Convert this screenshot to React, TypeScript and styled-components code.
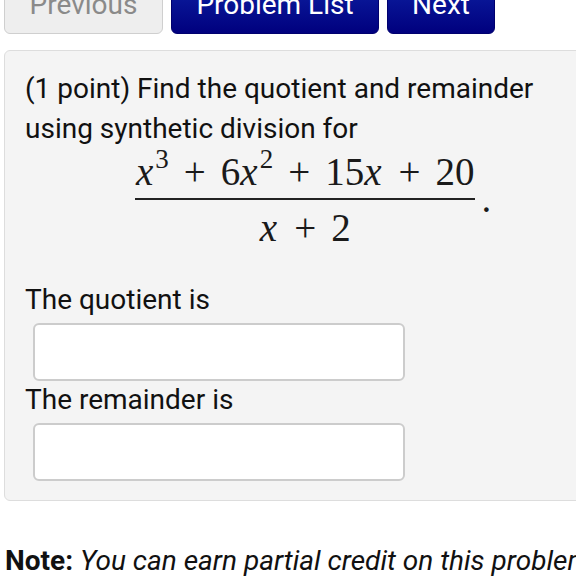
import React from "react";
import styled, { createGlobalStyle } from "styled-components";

const GlobalStyle = createGlobalStyle`
  html, body {
    margin: 0;
    padding: 0;
    background: #ffffff;
    overflow: hidden;
  }
  body {
    font-family: Roboto, "Liberation Sans", Arial, sans-serif;
    color: #111111;
  }
`;

const Page = styled.div`
  width: 576px;
  height: 576px;
  overflow: hidden;
`;

const Nav = styled.nav`
  display: flex;
  gap: 8px;
  margin-top: -16px;
  padding-left: 4px;
`;

const NavButton = styled.button<{ $primary?: boolean; $width: number }>`
  box-sizing: border-box;
  width: ${(p) => p.$width}px;
  height: 50px;
  padding: 0 0 8px;
  border-radius: 6px;
  font-family: Roboto, "Liberation Sans", Arial, sans-serif;
  font-size: 28px;
  line-height: 28px;
  cursor: pointer;
  border: 1px solid ${(p) => (p.$primary ? "#00006e" : "#cfcfcf")};
  color: ${(p) => (p.$primary ? "#ffffff" : "#8a8a8a")};
  background: ${(p) =>
    p.$primary ? "linear-gradient(#0c1ea0, #00007e)" : "#eeeeee"};
`;

const Panel = styled.section`
  box-sizing: border-box;
  margin: 16px 0 0 4px;
  width: 620px;
  height: 451px;
  padding: 18px 20px 18px 20px;
  background: #f4f4f4;
  border: 1px solid #dddddd;
  border-radius: 6px;
`;

const Question = styled.p`
  margin: 0;
  font-size: 28px;
  line-height: 40px;
`;

const MathRow = styled.div`
  display: flex;
  align-items: center;
  margin-left: 110px;
  font-family: "Liberation Serif", "Times New Roman", serif;
  font-size: 39px;
  color: #1a1a1a;
`;

const Fraction = styled.div`
  display: inline-flex;
  flex-direction: column;
  align-items: center;
`;

const Numerator = styled.div`
  padding: 0 1px;
  height: 44px;
  line-height: 44px;
  margin-top: 1px;
  white-space: nowrap;
`;

const Bar = styled.div`
  align-self: stretch;
  height: 2px;
  margin-top: 4px;
  background: #222222;
`;

const Denominator = styled.div`
  height: 56px;
  line-height: 56px;
  white-space: nowrap;
`;

const Var = styled.i`
  font-style: italic;
  margin-right: 2px;
`;

const Sup = styled.sup`
  font-size: 27px;
  vertical-align: 17px;
  line-height: 0;
`;

const Op = styled.span`
  margin: 0 15px;
`;

const Period = styled.span`
  align-self: center;
  margin: -8px 0 0 6px;
`;

const Label = styled.div<{ $gap: number }>`
  margin-top: ${(p) => p.$gap}px;
  font-size: 28px;
  line-height: 40px;
`;

const AnswerInput = styled.input`
  box-sizing: border-box;
  display: block;
  width: 372px;
  height: 58px;
  margin: 3px 0 0 8px;
  background: #ffffff;
  border: 2px solid #cccccc;
  border-radius: 6px;
  font-size: 22px;
  padding: 0 10px;
  outline: none;
`;

const Note = styled.p`
  margin: 40px 0 0 5px;
  font-size: 28px;
  line-height: 40px;
  white-space: nowrap;
`;

const NoteLead = styled.strong`
  font-weight: 700;
`;

const NoteText = styled.em`
  font-style: italic;
`;

export default function App() {
  return (
    <Page>
      <GlobalStyle />
      <Nav>
        <NavButton $width={159}>Previous</NavButton>
        <NavButton $primary $width={208}>
          Problem List
        </NavButton>
        <NavButton $primary $width={108}>
          Next
        </NavButton>
      </Nav>
      <Panel>
        <Question>
          (1 point) Find the quotient and remainder
          <br />
          using synthetic division for
        </Question>
        <MathRow>
          <Fraction>
            <Numerator>
              <Var>x</Var>
              <Sup>3</Sup>
              <Op>+</Op>6<Var>x</Var>
              <Sup>2</Sup>
              <Op>+</Op>15<Var>x</Var>
              <Op>+</Op>20
            </Numerator>
            <Bar />
            <Denominator>
              <Var>x</Var>
              <Op>+</Op>2
            </Denominator>
          </Fraction>
          <Period>.</Period>
        </MathRow>
        <Label $gap={24}>The quotient is</Label>
        <AnswerInput type="text" aria-label="quotient" />
        <Label $gap={-1}>The remainder is</Label>
        <AnswerInput type="text" aria-label="remainder" />
      </Panel>
      <Note>
        <NoteLead>Note:</NoteLead>{" "}
        <NoteText>You can earn partial credit on this problem.</NoteText>
      </Note>
    </Page>
  );
}
